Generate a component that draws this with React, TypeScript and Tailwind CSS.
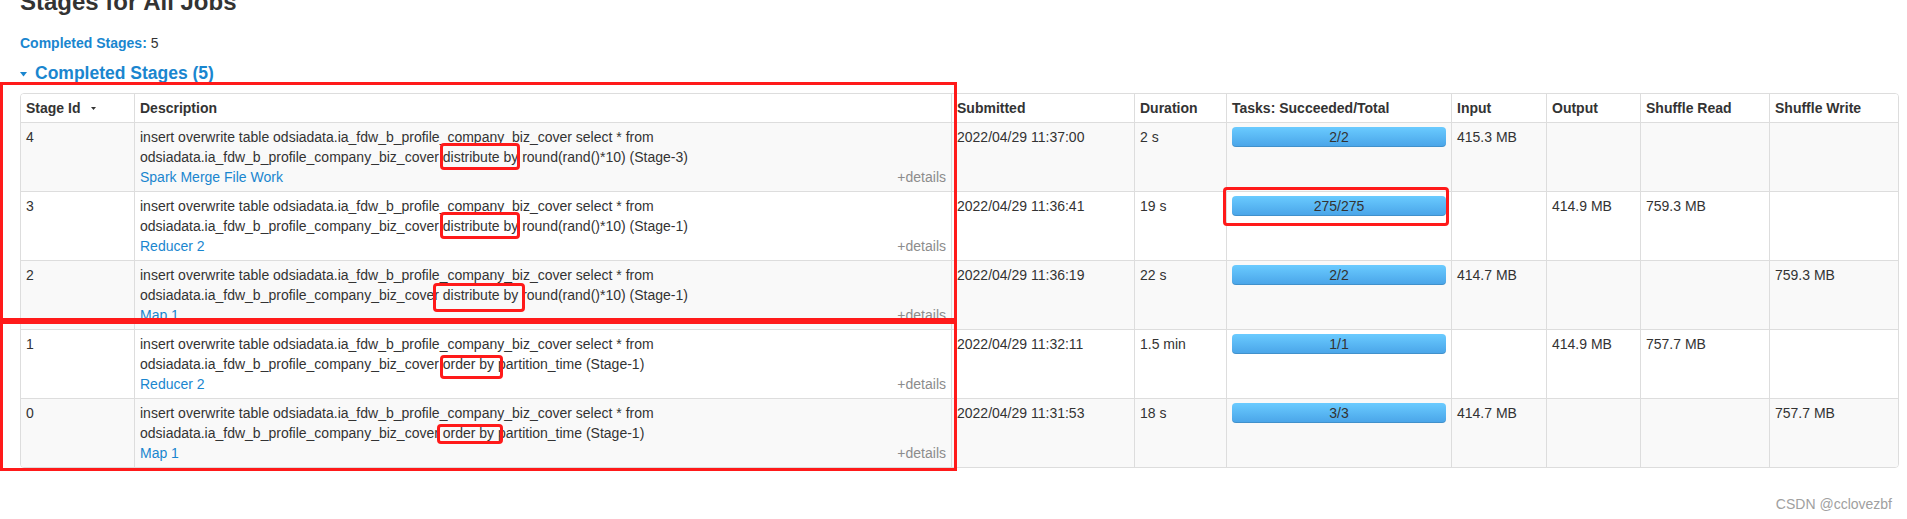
import React from 'react';

type StageRow = {
  id: string;
  clause: string;
  kind: string;
  submitted: string;
  duration: string;
  tasks: string;
  input: string;
  output: string;
  shuffleRead: string;
  shuffleWrite: string;
};

const tableName = 'odsiadata.ia_fdw_b_profile_company_biz_cover';

const stages: StageRow[] = [
  {
    id: '4',
    clause: 'distribute by round(rand()*10) (Stage-3)',
    kind: 'Spark Merge File Work',
    submitted: '2022/04/29 11:37:00',
    duration: '2 s',
    tasks: '2/2',
    input: '415.3 MB',
    output: '',
    shuffleRead: '',
    shuffleWrite: '',
  },
  {
    id: '3',
    clause: 'distribute by round(rand()*10) (Stage-1)',
    kind: 'Reducer 2',
    submitted: '2022/04/29 11:36:41',
    duration: '19 s',
    tasks: '275/275',
    input: '',
    output: '414.9 MB',
    shuffleRead: '759.3 MB',
    shuffleWrite: '',
  },
  {
    id: '2',
    clause: 'distribute by round(rand()*10) (Stage-1)',
    kind: 'Map 1',
    submitted: '2022/04/29 11:36:19',
    duration: '22 s',
    tasks: '2/2',
    input: '414.7 MB',
    output: '',
    shuffleRead: '',
    shuffleWrite: '759.3 MB',
  },
  {
    id: '1',
    clause: 'order by partition_time (Stage-1)',
    kind: 'Reducer 2',
    submitted: '2022/04/29 11:32:11',
    duration: '1.5 min',
    tasks: '1/1',
    input: '',
    output: '414.9 MB',
    shuffleRead: '757.7 MB',
    shuffleWrite: '',
  },
  {
    id: '0',
    clause: 'order by partition_time (Stage-1)',
    kind: 'Map 1',
    submitted: '2022/04/29 11:31:53',
    duration: '18 s',
    tasks: '3/3',
    input: '414.7 MB',
    output: '',
    shuffleRead: '',
    shuffleWrite: '757.7 MB',
  },
];

const headers = [
  'Description',
  'Submitted',
  'Duration',
  'Tasks: Succeeded/Total',
  'Input',
  'Output',
  'Shuffle Read',
  'Shuffle Write',
];

const gridCols = 'grid grid-cols-[113px_817px_183px_92px_225px_95px_94px_129px_129px]';
const cell = 'px-[5px] py-[4px] border-l border-[#dddddd]';

// red annotation boxes drawn over the screenshot
const marks = [
  'left-0 top-[82px] w-[957px] h-[239px]',
  'left-0 top-[321px] w-[957px] h-[150px]',
  'left-[440px] top-[143px] w-[80px] h-[27px] rounded-[4px]',
  'left-[440px] top-[212px] w-[80px] h-[27px] rounded-[4px]',
  'left-[433px] top-[283px] w-[92px] h-[29px] rounded-[4px]',
  'left-[440px] top-[355px] w-[63px] h-[24px] rounded-[4px]',
  'left-[437px] top-[424px] w-[66px] h-[20px] rounded-[4px]',
  'left-[1223px] top-[187px] w-[226px] h-[39px] rounded-[4px]',
];

export default function App() {
  return (
    <div className="relative h-[519px] w-[1907px] overflow-hidden bg-white font-['Liberation_Sans',Arial,sans-serif] text-[14px] leading-[20px] text-[#333333]">
      <div className="pl-[20px]">
        <h3 className="-mt-[12px] h-[28px] text-[24px] font-bold leading-[28px] text-[#333333]">
          Stages for All Jobs
        </h3>

        <ul className="mt-[17px]">
          <li>
            <a className="font-bold text-[#1a86cf]">Completed Stages:</a> 5
          </li>
        </ul>

        <h4 className="mt-[10px] flex items-center text-[17.5px] font-bold leading-[20px] text-[#1a86cf]">
          <svg width="7" height="5" viewBox="0 0 7 5" className="mt-[2px]">
            <polygon points="0,0 7,0 3.5,4.5" fill="#1a86cf" />
          </svg>
          <span className="ml-[8px]">Completed Stages (5)</span>
        </h4>

        <div className="mt-[10px] w-[1879px] overflow-hidden rounded-[4px] border border-[#dddddd]">
          <div className={`${gridCols} bg-white font-bold`}>
            <div className="flex items-center px-[5px] py-[4px]">
              <span>Stage Id</span>
              <svg width="5" height="3" viewBox="0 0 5 3" className="ml-[11px] mt-[1px]">
                <polygon points="0,0 5,0 2.5,3" fill="#333333" />
              </svg>
            </div>
            {headers.map((h) => (
              <div key={h} className={cell}>
                {h}
              </div>
            ))}
          </div>

          {stages.map((s, i) => (
            <div
              key={s.id}
              className={`${gridCols} border-t border-[#dddddd] ${i % 2 === 0 ? 'bg-[#f9f9f9]' : 'bg-white'}`}
            >
              <div className="px-[5px] py-[4px]">{s.id}</div>
              <div className={cell}>
                <div>insert overwrite table {tableName} select * from</div>
                <div>
                  {tableName} {s.clause}
                </div>
                <div className="flex justify-between">
                  <a className="text-[#1a86cf]">{s.kind}</a>
                  <span className="text-[#8c8c8c]">+details</span>
                </div>
              </div>
              <div className={cell}>{s.submitted}</div>
              <div className={cell}>{s.duration}</div>
              <div className={cell}>
                <div className="h-[20px] rounded-[4px] bg-gradient-to-b from-[#6acbff] to-[#49a4e8] text-center shadow-[inset_0_-1px_0_rgba(0,0,0,0.12)]">
                  {s.tasks}
                </div>
              </div>
              <div className={cell}>{s.input}</div>
              <div className={cell}>{s.output}</div>
              <div className={cell}>{s.shuffleRead}</div>
              <div className={cell}>{s.shuffleWrite}</div>
            </div>
          ))}
        </div>
      </div>

      {marks.map((m) => (
        <div key={m} className={`pointer-events-none absolute border-[3px] border-[#ff1a1a] ${m}`} />
      ))}

      <div className="absolute right-[15px] top-[494px] text-[14px] text-[#a0a0a0]">CSDN @cclovezbf</div>
    </div>
  );
}
